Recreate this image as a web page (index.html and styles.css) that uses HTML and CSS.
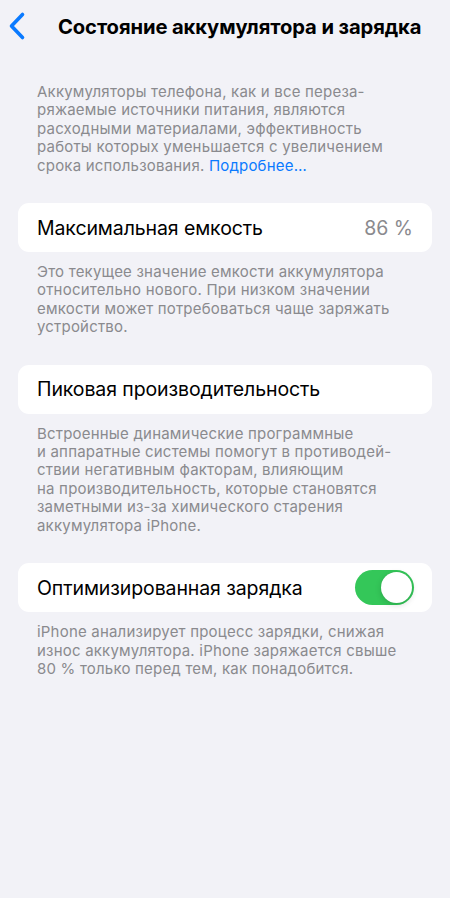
FILE: index.html
```html
<!DOCTYPE html>
<html lang="ru">
<head>
<meta charset="utf-8">
<title>Состояние аккумулятора и зарядка</title>
<link rel="stylesheet" href="styles.css">
</head>
<body>
<header class="nav">
  <a class="back" href="#" aria-label="Назад">
    <svg width="20" height="30" viewBox="0 0 20 30" aria-hidden="true">
      <path d="M14.5 3.5 L3.5 15 L14.5 26.5" fill="none" stroke="#0a7aff" stroke-width="3.6" stroke-linecap="round" stroke-linejoin="round"/>
    </svg>
  </a>
  <h1 class="title">Состояние аккумулятора и зарядка</h1>
</header>

<main class="content">
  <p class="note intro">Аккумуляторы телефона, как и все переза-<br>ряжаемые источники питания, являются<br>расходными материалами, эффективность<br>работы которых уменьшается с увеличением<br>срока использования. <a class="link" href="#">Подробнее…</a></p>

  <section class="group">
    <div class="cell">
      <span class="label">Максимальная емкость</span>
      <span class="value">86 %</span>
    </div>
    <p class="note">Это текущее значение емкости аккумулятора<br>относительно нового. При низком значении<br>емкости может потребоваться чаще заряжать<br>устройство.</p>
  </section>

  <section class="group">
    <div class="cell">
      <span class="label">Пиковая производительность</span>
    </div>
    <p class="note">Встроенные динамические программные<br>и аппаратные системы помогут в противодей-<br>ствии негативным факторам, влияющим<br>на производительность, которые становятся<br>заметными из-за химического старения<br>аккумулятора iPhone.</p>
  </section>

  <section class="group">
    <div class="cell">
      <span class="label">Оптимизированная зарядка</span>
      <span class="switch is-on" role="switch" aria-checked="true"><span class="knob"></span></span>
    </div>
    <p class="note">iPhone анализирует процесс зарядки, снижая<br>износ аккумулятора. iPhone заряжается свыше<br>80 % только перед тем, как понадобится.</p>
  </section>
</main>
</body>
</html>
```

FILE: styles.css
```css
* {
  box-sizing: border-box;
}

html,
body {
  margin: 0;
  padding: 0;
}

body {
  background: #f2f2f7;
  font-family: Inter, "Noto Sans", "Liberation Sans", sans-serif;
  color: #000;
  min-height: 898px;
  -webkit-font-smoothing: antialiased;
}

/* navigation bar */
.nav {
  height: 52px;
  display: flex;
  align-items: center;
  padding-left: 8px;
}

.back {
  display: flex;
  align-items: center;
  width: 50px;
  height: 30px;
}

.title {
  margin: 0;
  font-size: 20.2px;
  font-weight: 700;
  letter-spacing: -0.1px;
  white-space: nowrap;
}

/* page body */
.content {
  padding: 0 18px;
}

.note {
  margin: 0;
  padding: 0 19px;
  font-size: 15px;
  line-height: 18.4px;
  letter-spacing: 0.2px;
  color: #8a8a8e;
  white-space: nowrap;
}

.intro {
  margin-top: 31px;
  margin-bottom: 28px;
}

.link {
  color: #0a7aff;
  text-decoration: none;
}

.group {
  margin-bottom: 28px;
}

.group .note {
  margin-top: 11px;
}

.cell {
  height: 49px;
  background: #fff;
  border-radius: 11px;
  display: flex;
  align-items: center;
  justify-content: space-between;
  padding: 0 19px;
}

.label {
  font-size: 19.5px;
  letter-spacing: -0.1px;
}

.value {
  font-size: 19.5px;
  color: #8a8a8e;
}

/* toggle switch */
.switch {
  width: 59px;
  height: 35px;
  border-radius: 17.5px;
  background: #e9e9eb;
  position: relative;
  margin-right: -1px;
}

.switch.is-on {
  background: #34c759;
}

.knob {
  position: absolute;
  top: 2px;
  left: 2px;
  width: 31px;
  height: 31px;
  border-radius: 50%;
  background: #fff;
  box-shadow: 0 2px 6px rgba(0, 0, 0, 0.15), 0 0 1px rgba(0, 0, 0, 0.1);
}

.switch.is-on .knob {
  left: 26px;
}
```
